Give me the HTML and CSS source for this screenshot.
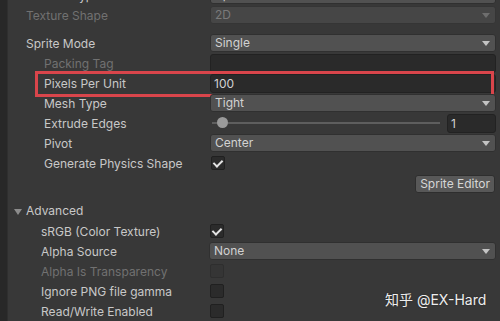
FILE: index.html
```html
<!DOCTYPE html>
<html lang="en">
<head>
  <meta charset="UTF-8" />
  <meta name="viewport" content="width=device-width, initial-scale=1.0"/>
  <title>Sprite Import Settings</title>
  <link rel="stylesheet" href="styles.css">
</head>
<body>

  <div class="inspector">
    <div class="edge"></div>

    <div class="props">
      <div class="row cut">
        <span class="label">Texture Type</span>
        <div class="dropdown">Sprite (2D and UI)</div>
      </div>
      <div class="row">
        <span class="label disabled">Texture Shape</span>
        <div class="dropdown off">2D</div>
      </div>

      <div class="spacer"></div>

      <div class="row">
        <span class="label">Sprite Mode</span>
        <div class="dropdown">Single</div>
      </div>
      <div class="row sub">
        <span class="label disabled">Packing Tag</span>
        <div class="textfield"></div>
      </div>
      <div class="row sub highlight">
        <span class="label">Pixels Per Unit</span>
        <div class="textfield">100</div>
      </div>
      <div class="row sub">
        <span class="label">Mesh Type</span>
        <div class="dropdown">Tight</div>
      </div>
      <div class="row sub">
        <span class="label">Extrude Edges</span>
        <div class="slider">
          <div class="track"><span class="knob"></span></div>
          <div class="textfield num">1</div>
        </div>
      </div>
      <div class="row sub">
        <span class="label">Pivot</span>
        <div class="dropdown">Center</div>
      </div>
      <div class="row sub">
        <span class="label">Generate Physics Shape</span>
        <div><span class="check on"></span></div>
      </div>

      <div class="actions">
        <button class="btn">Sprite Editor</button>
      </div>

      <div class="foldout">Advanced</div>
      <div class="row adv">
        <span class="label">sRGB (Color Texture)</span>
        <div><span class="check on"></span></div>
      </div>
      <div class="row adv">
        <span class="label">Alpha Source</span>
        <div class="dropdown">None</div>
      </div>
      <div class="row adv">
        <span class="label disabled">Alpha Is Transparency</span>
        <div><span class="check off"></span></div>
      </div>
      <div class="row adv">
        <span class="label">Ignore PNG file gamma</span>
        <div><span class="check"></span></div>
      </div>
      <div class="row adv">
        <span class="label">Read/Write Enabled</span>
        <div><span class="check"></span></div>
      </div>
    </div>

    <div class="watermark">知乎 @EX-Hard</div>
  </div>

</body>
</html>
```

FILE: styles.css
```css
body {
  margin: 0;
  background: #383838;
  color: #c8c8c8;
  font-family: Inter, 'Noto Sans', 'Noto Sans CJK SC', sans-serif;
  font-size: 12px;
  overflow: hidden;
}

.inspector {
  position: relative;
  display: flex;
  width: 500px;
  height: 321px;
  overflow: hidden;
}

.edge {
  width: 7px;
  flex: none;
  background: #282828;
  border-right: 1px solid #2f2f2f;
}

.props {
  flex: 1;
  display: flex;
  flex-direction: column;
  padding-right: 4px;
}

.row {
  position: relative;
  display: grid;
  grid-template-columns: 202px 1fr;
  align-items: center;
  height: 20px;
  flex: none;
}

.row .label {
  padding-left: 18px;
  white-space: nowrap;
}

.row.sub .label { padding-left: 36px; }
.row.adv .label { padding-left: 33px; }
.row.adv { grid-template-columns: 201px 1fr; }

.row.cut { margin-top: -15px; }

.label.disabled { color: #717171; }

.spacer { height: 8px; flex: none; }

.dropdown {
  position: relative;
  height: 16px;
  line-height: 16px;
  padding-left: 4px;
  background: #515151;
  border: 1px solid #303030;
  border-radius: 3px;
  color: #d2d2d2;
}

.dropdown::after {
  content: '';
  position: absolute;
  right: 5px;
  top: 6px;
  border-left: 4px solid transparent;
  border-right: 4px solid transparent;
  border-top: 5px solid #c4c4c4;
}

.dropdown.off {
  background: #464646;
  border-color: #353535;
  color: #7a7a7a;
}

.dropdown.off::after { border-top-color: #6e6e6e; }

.textfield {
  height: 17px;
  line-height: 17px;
  padding-left: 3px;
  background: #2a2a2a;
  border: 1px solid #222;
  border-radius: 3px;
  color: #d2d2d2;
}

.highlight::before {
  content: '';
  position: absolute;
  left: 27px;
  right: 2px;
  top: -2px;
  height: 20px;
  border: 3px solid #d9454b;
  pointer-events: none;
}

.slider {
  display: flex;
  align-items: center;
  gap: 7px;
  padding-left: 2px;
}

.track {
  position: relative;
  flex: 1;
  height: 2px;
  background: #5e5e5e;
}

.knob {
  position: absolute;
  left: 5px;
  top: -5px;
  width: 11px;
  height: 11px;
  border-radius: 50%;
  background: #9a9a9a;
}

.textfield.num { width: 44px; flex: none; }

.check {
  display: block;
  width: 12px;
  height: 12px;
  margin-left: 1px;
  background: #2b2b2b;
  border: 1px solid #202020;
  border-radius: 2px;
  position: relative;
}

.check.on::after {
  content: '';
  position: absolute;
  left: 3px;
  top: 1px;
  width: 4px;
  height: 7px;
  border-right: 2px solid #e4e4e4;
  border-bottom: 2px solid #e4e4e4;
  transform: rotate(45deg);
}

.check.off {
  background: #353535;
  border-color: #2e2e2e;
}

.actions {
  display: flex;
  justify-content: flex-end;
  align-items: center;
  height: 21px;
  flex: none;
}

.btn {
  height: 18px;
  padding: 0 4px;
  margin-right: 1px;
  background: #585858;
  border: 1px solid #2e2e2e;
  border-radius: 3px;
  color: #d6d6d6;
  font-family: inherit;
  font-size: 12px;
}

.foldout {
  position: relative;
  height: 20px;
  line-height: 20px;
  margin-top: 7px;
  padding-left: 18px;
  flex: none;
}

.foldout::before {
  content: '';
  position: absolute;
  left: 6px;
  top: 8px;
  border-left: 4px solid transparent;
  border-right: 4px solid transparent;
  border-top: 6px solid #8c8c8c;
}

.watermark {
  position: absolute;
  left: 385px;
  top: 289px;
  font-size: 14px;
  color: #eeeeee;
  white-space: nowrap;
  text-shadow: 0 0 2px rgba(0, 0, 0, 0.4);
}
```
